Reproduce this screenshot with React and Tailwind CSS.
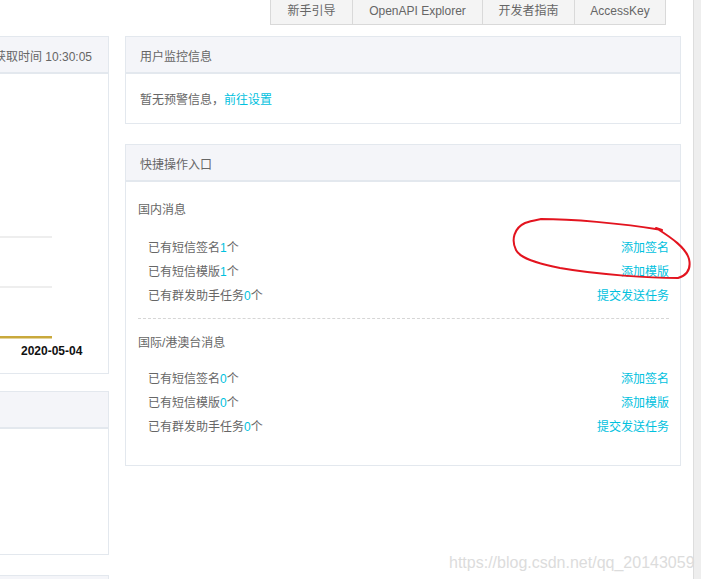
import React from "react";

const font = "font-['Liberation_Sans','Noto_Sans_CJK_SC',sans-serif]";

function Tab({ w, children, last }) {
  return (
    <div
      className={
        "h-[25px] pb-[3px] flex items-center justify-center border-l border-b border-[#d9d9d9] bg-[#f4f4f4] text-[12px] text-[#666] whitespace-nowrap " +
        w +
        (last ? " border-r" : "")
      }
    >
      {children}
    </div>
  );
}

function Header({ children, right }) {
  return (
    <div
      className={
        "h-[37px] pt-[4px] bg-[#f4f5f9] border-b-2 border-[#e3e8ee] flex items-center text-[12px] text-[#666] whitespace-nowrap overflow-hidden " +
        (right ? "justify-end pr-[16px]" : "pl-[14px]")
      }
    >
      {children}
    </div>
  );
}

function Row({ label, num, link }) {
  return (
    <div className="h-[24px] pt-[4px] flex items-center justify-between pl-[10px] text-[12px]">
      <span className="text-[#666]">
        {label}
        <span className="text-[#00c1de]">{num}</span>个
      </span>
      <span className="text-[#00c1de]">{link}</span>
    </div>
  );
}

export default function App() {
  return (
    <div className={"relative w-[701px] h-[579px] overflow-hidden bg-white flex " + font}>
      <div className="w-[693px] flex flex-col">
        {/* tabs */}
        <div className="flex justify-end pr-[27px]">
          <Tab w="w-[82px]">新手引导</Tab>
          <Tab w="w-[130px]">OpenAPI Explorer</Tab>
          <Tab w="w-[92px]">开发者指南</Tab>
          <Tab w="w-[92px]" last>
            AccessKey
          </Tab>
        </div>

        <div className="flex gap-[16px] mt-[11px]">
          {/* left column */}
          <div className="w-[109px] flex flex-col">
            <div className="h-[338px] border-t border-r border-b border-[#e3e8ee] flex flex-col">
              <Header right>获取时间 10:30:05</Header>
              <div className="flex-1 relative">
                <svg width="108" height="300" className="absolute left-0 top-0">
                  <rect x="0" y="162" width="52" height="2" fill="#eeeeee" />
                  <rect x="0" y="212" width="52" height="2" fill="#eeeeee" />
                  <rect x="0" y="262" width="52" height="2.5" fill="#c9a93c" />
                  <text
                    x="21"
                    y="281"
                    fontFamily="Liberation Sans, Arial, sans-serif"
                    fontSize="12"
                    fontWeight="bold"
                    fill="#111"
                  >
                    2020-05-04
                  </text>
                </svg>
              </div>
            </div>
            <div className="mt-[17px] h-[164px] border-t border-r border-b border-[#e3e8ee] flex flex-col">
              <Header right>&nbsp;</Header>
            </div>
            <div className="mt-[20px] h-[40px] border-t border-r border-[#e3e8ee] bg-[#f4f5f9]" />
          </div>

          {/* right column */}
          <div className="w-[556px] flex flex-col">
            <div className="h-[88px] border border-[#e3e8ee] flex flex-col">
              <Header>用户监控信息</Header>
              <div className="flex-1 pt-[2px] flex items-center pl-[14px] text-[12px] text-[#666]">
                暂无预警信息，<span className="text-[#00c1de]">前往设置</span>
              </div>
            </div>

            <div className="mt-[20px] h-[322px] border border-[#e3e8ee] flex flex-col">
              <Header>快捷操作入口</Header>
              <div className="flex-1 pl-[12px] pr-[11px] pt-[20px]">
                <div className="h-[16px] flex items-center text-[12px] text-[#666]">国内消息</div>
                <div className="mt-[16px]">
                  <Row label="已有短信签名" num="1" link="添加签名" />
                  <Row label="已有短信模版" num="1" link="添加模版" />
                  <Row label="已有群发助手任务" num="0" link="提交发送任务" />
                </div>
                <div className="mt-[12px] border-t border-dashed border-[#d6d6d6]" />
                <div className="mt-[16px] h-[16px] flex items-center text-[12px] text-[#666]">国际/港澳台消息</div>
                <div className="mt-[14px]">
                  <Row label="已有短信签名" num="0" link="添加签名" />
                  <Row label="已有短信模版" num="0" link="添加模版" />
                  <Row label="已有群发助手任务" num="0" link="提交发送任务" />
                </div>
              </div>
            </div>
          </div>
        </div>
      </div>

      {/* right scroll strip */}
      <div className="w-[8px] h-full bg-[#eeeeee] border-l border-[#dddddd]" />

      {/* red freehand annotation */}
      <svg
        className="absolute left-0 top-0 pointer-events-none"
        width="701"
        height="579"
        viewBox="0 0 701 579"
      >
        <path
          d="M541 219 C 570 219, 620 223, 662 230 L 656 228 C 672 238, 686 248, 689 259 C 691 268, 688 275, 678 278 C 650 278, 600 275, 560 268 C 535 263, 520 258, 516 250 C 511 240, 514 228, 525 223 C 530 221, 536 220, 541 219 Z"
          fill="none"
          stroke="#e3141f"
          strokeWidth="2"
          strokeLinejoin="round"
        />
      </svg>

      {/* watermark */}
      <div className="absolute left-[449px] top-[553px] text-[16px] leading-[20px] text-[#dcdcdc] whitespace-nowrap font-['Liberation_Sans',sans-serif]">
        https://blog.csdn.net/qq_20143059
      </div>
    </div>
  );
}
